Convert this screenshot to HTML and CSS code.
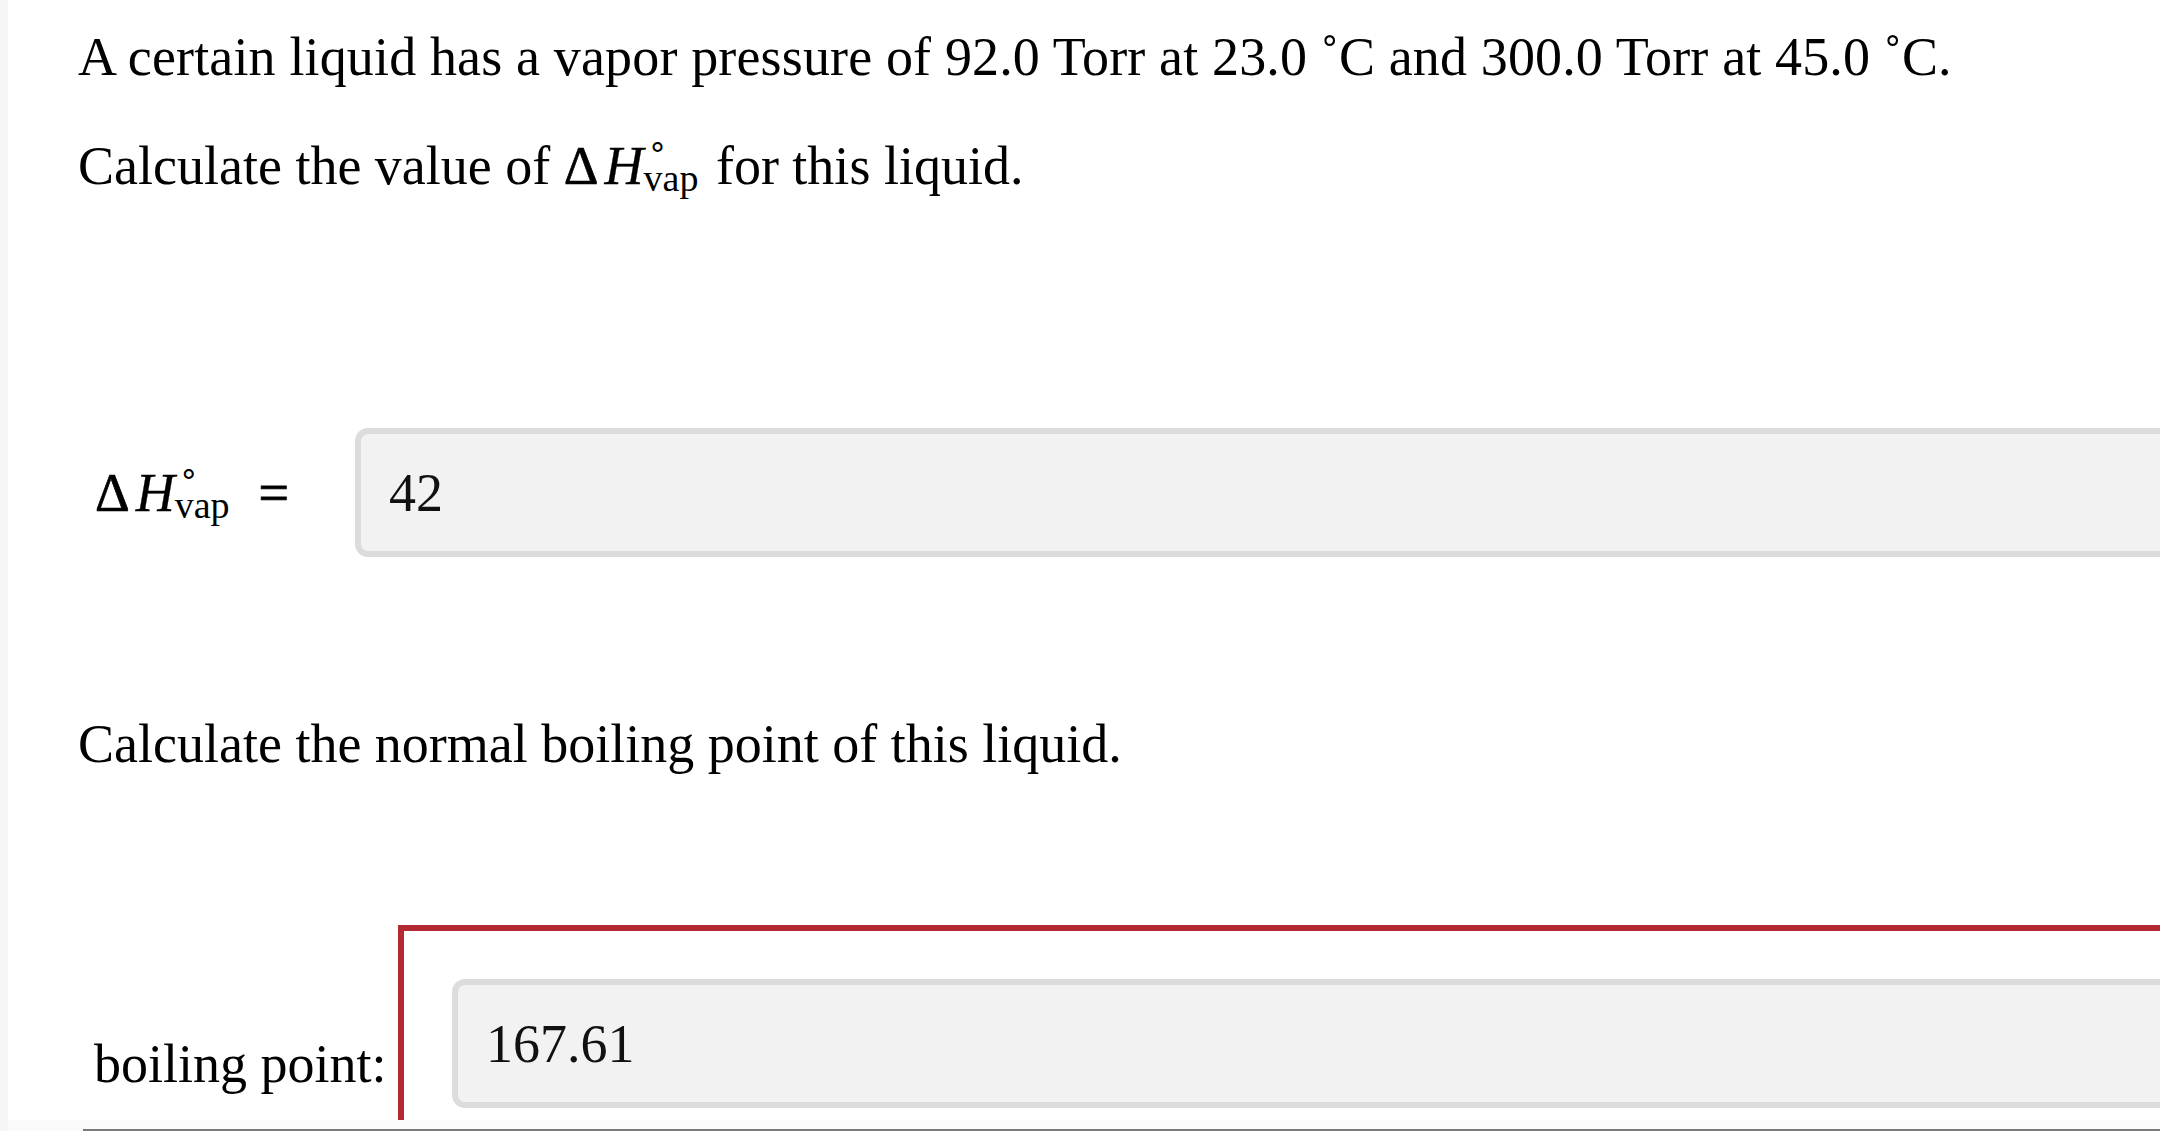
FILE: index.html
```html
<!DOCTYPE html>
<html lang="en">
<head>
  <meta charset="UTF-8">
  <meta name="viewport" content="width=device-width, initial-scale=1.0">
  <title>Vapor pressure question</title>
  <link rel="stylesheet" href="styles.css">
</head>
<body>
  <div class="frame">
    <div class="question">
      <p class="stem">A certain liquid has a vapor pressure of 92.0 Torr at 23.0 ˚C and 300.0 Torr at 45.0 ˚C.</p>
      <p class="prompt">Calculate the value of <span class="math"><span class="delta">Δ</span><i>H</i><span class="supsub"><span class="deg">∘</span><span class="sub">vap</span></span></span> for this liquid.</p>

      <div class="answer-row">
        <span class="label math"><span class="delta">Δ</span><i>H</i><span class="supsub"><span class="deg">∘</span><span class="sub">vap</span></span><span class="eq">=</span></span>
        <div class="field">42</div>
      </div>

      <p class="prompt second">Calculate the normal boiling point of this liquid.</p>

      <div class="answer-row boiling">
        <span class="label">boiling point:</span>
        <div class="incorrect">
          <div class="field">167.61</div>
        </div>
      </div>
    </div>
  </div>
  <div class="footer"><div class="footer-line"></div></div>
</body>
</html>
```

FILE: styles.css
```css
html, body {
  margin: 0;
}
body {
  background: #fff;
  color: #000;
  font-family: "Liberation Serif", "Times New Roman", serif;
  overflow: hidden;
}
.frame {
  height: 1120px;
  overflow: hidden;
  border-left: 8px solid #f6f6f6;
}
.question {
  padding-left: 70px;
  font-size: 54px;
  line-height: 62px;
}
.stem {
  margin: 26px 0 0;
  white-space: nowrap;
  letter-spacing: 0.15px;
}
.prompt {
  margin: 47px 0 0;
}
.prompt.second {
  margin-top: 156px;
}

/* Delta H vap: ring stacked over the subscript */
.delta {
  -webkit-text-stroke: 0.7px #000;
}
.math i {
  margin-left: 6px;
  -webkit-text-stroke: 0.3px #000;
}
.supsub {
  display: inline-block;
  vertical-align: -7px;
  margin-right: 4px;
}
.deg {
  display: block;
  padding-left: 4px;
  padding-bottom: 9px;
  font-family: "DejaVu Sans", sans-serif;
  font-size: 32px;
  line-height: 20px;
  height: 20px;
}
.sub {
  display: block;
  font-size: 38px;
  line-height: 26px;
}
.eq {
  margin-left: 25px;
  -webkit-text-stroke: 0.8px #000;
}

.answer-row {
  display: flex;
  align-items: center;
  margin-top: 231px;
}
.label {
  width: 277px;
  flex-shrink: 0;
  box-sizing: border-box;
  padding-left: 17px;
  white-space: nowrap;
}
.field {
  flex: 1;
  margin-right: -60px;
  height: 129px;
  box-sizing: border-box;
  border: 6px solid #dcdcdc;
  border-radius: 13px;
  background: #f2f2f2;
  padding-left: 28px;
  display: flex;
  align-items: center;
  color: #111;
}

.answer-row.boiling {
  align-items: flex-start;
  margin-top: 150px;
}
.boiling .label {
  width: 320px;
  padding-left: 16px;
  padding-top: 108px;
}
.incorrect {
  flex: 1;
  margin-right: -60px;
  border: 6px solid #b42a32;
  border-bottom: none;
  padding: 48px 0 48px 48px;
  display: flex;
}

.footer {
  height: 11px;
  border-left: 8px solid #f6f6f6;
  background: #fafafa;
  display: flex;
  flex-direction: column;
  justify-content: flex-end;
}
.footer-line {
  margin-left: 75px;
  height: 2px;
  background: #7a7a7a;
}
```
